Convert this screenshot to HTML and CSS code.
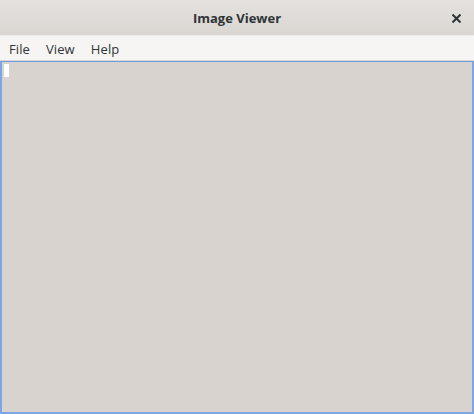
FILE: index.html
```html
<!DOCTYPE html>
<html>
<head>
<meta charset="utf-8">
<link rel="stylesheet" href="styles.css">
</head>
<body>
<div class="window">
  <header class="titlebar">
    <span class="title">Image Viewer</span>
    <button class="close" aria-label="Close">
      <svg width="9" height="9" viewBox="0 0 9 9"><path d="M1.2 1.2 L7.8 7.8 M7.8 1.2 L1.2 7.8" stroke="#2e3436" stroke-width="2" stroke-linecap="square"/></svg>
    </button>
  </header>
  <nav class="menubar">
    <span class="menu-item">File</span>
    <span class="menu-item">View</span>
    <span class="menu-item">Help</span>
  </nav>
  <main class="canvas">
    <div class="caret"></div>
  </main>
</div>
</body>
</html>
```
FILE: styles.css
```css
html, body {
  margin: 0;
  padding: 0;
  height: 100%;
}
body {
  font-family: "Open Sans", "Noto Sans", "DejaVu Sans", sans-serif;
  background: #dcd8d4;
}
.window {
  display: flex;
  flex-direction: column;
  height: 414px;
  width: 474px;
}
.titlebar {
  height: 35px;
  flex: none;
  background: linear-gradient(#e4e1de, #dad6d2);
  display: flex;
  align-items: center;
  justify-content: center;
  position: relative;
}
.title {
  font-weight: bold;
  font-size: 13px;
  color: #2e3436;
}
.close {
  position: absolute;
  right: 13px;
  top: 14px;
  width: 9px;
  height: 9px;
  padding: 0;
  border: 0;
  background: none;
  display: flex;
}
.menubar {
  height: 25px;
  flex: none;
  background: #f6f5f4;
  border-top: 1px solid #ebe9e7;
  box-sizing: border-box;
  display: flex;
  align-items: center;
  padding-left: 9px;
  gap: 16px;
  font-size: 13px;
  letter-spacing: 0.1px;
  color: #2e3436;
}
.menu-item {
  padding-top: 1px;
}
.canvas {
  flex: 1;
  background: #d8d3cf;
  border: 2px solid #7ea6e4;
  border-top: 1px solid #6d9be0;
  box-sizing: border-box;
  margin-top: 1px;
  padding: 2px 0 0 2px;
}
.caret {
  width: 5px;
  height: 13px;
  background: #ffffff;
}
```
